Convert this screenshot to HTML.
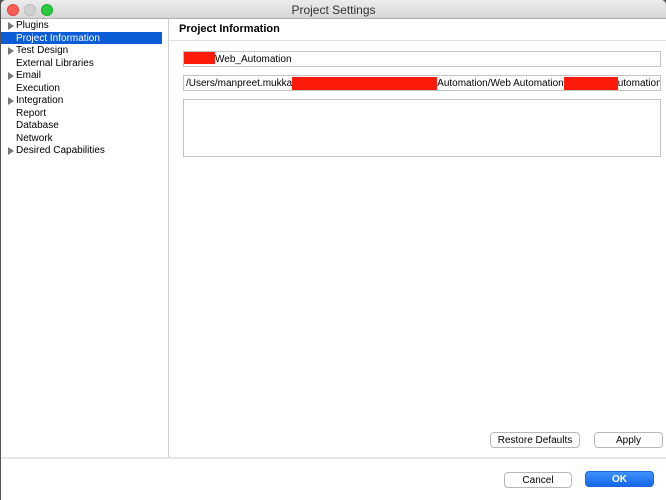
<html><head><style>
body{margin:0;width:666px;height:500px;overflow:hidden;background:#555;font-family:"Liberation Sans",sans-serif;font-size:10px;color:#000;position:relative}
.win{position:absolute;left:1px;top:0;width:665px;height:500px;background:#fff;border-radius:5px 5px 0 0;overflow:hidden}
.title{height:18px;background:linear-gradient(#ececec,#d6d6d6);border-bottom:1px solid #b0b0b0;text-align:center;font-size:12px;line-height:20px;color:#333}
.dot{position:absolute;top:4px;width:11px;height:11px;border-radius:50%}
.side{position:absolute;left:0;top:19px;width:167px;height:438px;background:#fff;border-right:1px solid #cfcfcf;padding-top:0px}
.it{height:12.5px;line-height:14px;padding-left:15px;position:relative;font-size:10px;width:146px}
.it.tri:before{content:"";position:absolute;left:7px;top:3px;border-left:6px solid #777;border-top:4px solid transparent;border-bottom:4px solid transparent}
.sel{background:#0b5cd7;color:#fff}
.main{position:absolute;left:168px;top:19px;right:0;height:438px;background:#fff}
.hdr{height:21px;border-bottom:1px solid #e2e2e2;font-weight:bold;font-size:11px;line-height:20px;padding-left:10px;background:#fff}
.f{position:absolute;left:14px;width:478px;border:1px solid #c4c4c4;background:#fff;font-size:10px;line-height:16px;padding-left:2px;box-sizing:border-box;white-space:nowrap;overflow:hidden}
.red{display:inline-block;background:#fe1a0b;height:13px;vertical-align:top;margin-top:1px}
.btn{position:absolute;height:14px;border:1px solid #b7b7b7;border-radius:4px;background:#fff;font-size:10px;text-align:center;line-height:16px}
.foot{position:absolute;left:0;top:457px;width:665px;height:43px;background:#fff;border-top:2px solid #e6e6e6}
</style></head><body>
<div class="win">
<div class="title">Project Settings</div>
<div class="dot" style="left:6px;background:#fd5f57;border:1px solid #e0443e;width:10px;height:10px"></div>
<div class="dot" style="left:23px;background:#d0d0d0;width:10px;height:10px;border:1px solid #bbb"></div>
<div class="dot" style="left:40px;background:#29c940;width:10px;height:10px;border:1px solid #1aab29"></div>
<div class="side">
<div class="it tri">Plugins</div>
<div class="it sel">Project Information</div>
<div class="it tri">Test Design</div>
<div class="it">External Libraries</div>
<div class="it tri">Email</div>
<div class="it">Execution</div>
<div class="it tri">Integration</div>
<div class="it">Report</div>
<div class="it">Database</div>
<div class="it">Network</div>
<div class="it tri">Desired Capabilities</div>
</div>
<div class="main">
<div class="hdr">Project Information</div>
<div class="f" style="top:32px;height:16px;padding-left:0"><span class="red" style="width:31px;margin-top:-1px"></span>Web_Automation</div>
<div class="f" style="top:56px;height:16px">/Users/manpreet.mukka<span class="red" style="width:145px"></span>Automation/Web Automation<span class="red" style="width:54px"></span>utomation</div>
<div class="f" style="top:80px;height:58px"></div>
<div class="btn" style="left:321px;top:413px;width:88px">Restore Defaults</div>
<div class="btn" style="left:425px;top:413px;width:67px">Apply</div>
</div>
<div class="foot">
<div class="btn" style="left:503px;top:13px;width:66px">Cancel</div>
<div class="btn" style="left:584px;top:12px;width:67px;background:linear-gradient(#3d92fb,#1566e8);border-color:#1b68e0;color:#fff;font-weight:bold">OK</div>
</div>
</div>
</body></html>
